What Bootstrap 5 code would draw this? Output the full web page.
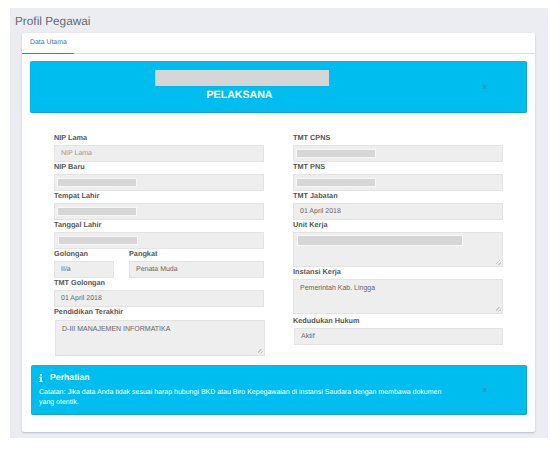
<!DOCTYPE html>
<html lang="id"><head><meta charset="utf-8"><title>Profil Pegawai</title>
<link href="https://cdn.jsdelivr.net/npm/bootstrap@5.3.0/dist/css/bootstrap.min.css" rel="stylesheet">
<style>
html,body{background:#fff;}
body{font-family:"Liberation Sans",Arial,sans-serif;font-size:7px;color:#555;text-rendering:geometricPrecision;}
.shell{margin:8px 12px 11px 10px;background:#ebedf2;padding:0 13px 6px 12px;height:430px;}
.page-ttl{font-size:11.8px;line-height:14px;font-weight:400;color:#666a70;margin:0 0 0 -7px;padding:6px 0 5px 0;height:25px;}
.sheet{border:0;border-radius:2px;box-shadow:0 1px 2px rgba(90,100,120,.35);background:#fff;height:399px;}
.tabbar{height:21px;border-bottom:1px solid #d8dbe2;margin:0;padding:0;flex-wrap:nowrap;}
.tabbar .nav-link{font-size:6.9px;line-height:20px;height:21px;padding:0 8px;color:#4a6fa5;border-bottom:1px solid #4a76b8;width:52px;border-radius:0;white-space:nowrap;}
.sheet-in{padding:7px 8px 0 8px;}
.hero{background:#00bdf0;border:0;border-bottom:1px solid #12a5cd;border-right:1px solid #12a5cd;border-radius:2px;height:52px;margin:0;color:#fff;}
.hero-main{width:424px;padding-top:9px;text-align:center;}
.hidden-name{background:#d6d6d6;width:173px;height:16px;margin:0 auto;box-shadow:-1px 0 0 rgba(255,255,255,.5);}
.hero-rank{font-size:10.6px;font-weight:700;line-height:14px;margin-top:2px;padding-right:5px;}
.dismiss{background:none;border:0;padding:0;color:#3f8aa5;font-size:9px;line-height:10px;width:10px;margin-left:26px;}
.form-area{margin:0;padding-top:20px;}
.col-a{padding:0 14.5px 0 24px;}
.col-b{padding:0 24px 0 14.5px;}
.fld-lbl{display:block;margin:0;font-size:7.3px;font-weight:700;line-height:9px;height:12px;color:#555;}
.fld-box.form-control,.fld-area.form-control{background:#eee;border:1px solid #e3e3e3;border-radius:0;font-size:7px;color:#666;padding:0 6px;box-shadow:none;}
.fld-box.form-control{height:17px;line-height:15px;display:flex;align-items:center;}
.fld-area.form-control{display:block;padding:3px 6px;line-height:10px;min-height:0;width:100%;}
.fld-area::-webkit-resizer{background:linear-gradient(135deg,transparent 30%,#c8c8c8 30%,#c8c8c8 45%,transparent 45%,transparent 65%,#c8c8c8 65%,#c8c8c8 80%,transparent 80%) no-repeat right 1px bottom 1px/5px 5px;}
.muted-val.form-control{color:#999;}
.mask{display:block;background:#d6d6d6;height:7px;width:78px;margin-left:-3px;box-shadow:0 0 0 1px rgba(255,255,255,.5);}
.mask-b{margin-left:-2px;}
.fld-wrap{position:relative;}
.fld-wrap .mask{position:absolute;left:5px;top:4px;width:164px;height:9px;margin:0;}
.gol{width:60px;flex:none;}
.gap-g{gap:15px;}
.h35{height:35px;}
.h36{height:36px;}
.nudge{margin-left:1px;margin-right:-1px;margin-top:1px;}
.nudge-b{margin-top:2px;}
.nudge-c{margin-left:1px;}
.notice{background:#00bdf0;border:0;border-bottom:1px solid #12a5cd;border-right:1px solid #12a5cd;border-radius:2px;height:50px;margin:9px 0 0 1px;padding:0;color:#fff;}
.notice-main{width:423px;padding:6px 0 0 8px;}
.notice-head{font-size:8.7px;font-weight:700;line-height:13px;margin:0 0 4px;display:flex;align-items:center;gap:7px;}
.notice-txt{font-size:7px;line-height:10px;margin:0;width:410px;}
</style></head><body>
<div class="shell">
<h1 class="page-ttl">Profil Pegawai</h1>
<div class="card sheet">
<ul class="nav tabbar"><li class="nav-item"><a class="nav-link active" href="#">Data Utama</a></li></ul>
<div class="sheet-in">
<div class="alert hero d-flex p-0" role="alert">
<div class="hero-main"><div class="hidden-name"></div><div class="hero-rank">PELAKSANA</div></div>
<button class="dismiss" type="button" aria-label="Close">×</button>
</div>
<div class="row g-0 form-area">
<div class="col-6 col-a">
<label class="fld-lbl">NIP Lama</label><div class="form-control fld-box muted-val">NIP Lama</div>
<label class="fld-lbl">NIP Baru</label><div class="form-control fld-box"><span class="mask"></span></div>
<label class="fld-lbl">Tempat Lahir</label><div class="form-control fld-box"><span class="mask"></span></div>
<label class="fld-lbl">Tanggal Lahir</label><div class="form-control fld-box"><span class="mask mask-b"></span></div>
<div class="d-flex gap-g">
<div class="gol"><label class="fld-lbl">Golongan</label><div class="form-control fld-box">II/a</div></div>
<div class="flex-grow-1"><label class="fld-lbl">Pangkat</label><div class="form-control fld-box">Penata Muda</div></div>
</div>
<label class="fld-lbl">TMT Golongan</label><div class="form-control fld-box">01 April 2018</div>
<label class="fld-lbl">Pendidikan Terakhir</label>
<div class="nudge"><textarea class="form-control fld-area h36" readonly>D-III MANAJEMEN INFORMATIKA</textarea></div>
</div>
<div class="col-6 col-b">
<label class="fld-lbl">TMT CPNS</label><div class="form-control fld-box"><span class="mask"></span></div>
<label class="fld-lbl">TMT PNS</label><div class="form-control fld-box"><span class="mask"></span></div>
<label class="fld-lbl">TMT Jabatan</label><div class="form-control fld-box">01 April 2018</div>
<label class="fld-lbl">Unit Kerja</label>
<div class="fld-wrap"><textarea class="form-control fld-area h35" readonly></textarea><span class="mask"></span></div>
<label class="fld-lbl">Instansi Kerja</label>
<textarea class="form-control fld-area h35" readonly>Pemerintah Kab. Lingga</textarea>
<div class="nudge-b"><label class="fld-lbl">Kedudukan Hukum</label></div>
<div class="nudge-c"><div class="form-control fld-box">Aktif</div></div>
</div>
</div>
<div class="alert notice d-flex" role="alert">
<div class="notice-main">
<div class="notice-head"><svg width="4" height="8" viewBox="0 0 4 9" aria-hidden="true"><rect x="1" y="0" width="2" height="2" fill="#fff"/><path d="M0 3h3v5h1v1H0V8h1V4H0z" fill="#fff"/></svg><span>Perhatian</span></div>
<p class="notice-txt">Catatan: Jika data Anda tidak sesuai harap hubungi BKD atau Biro Kepegawaian di instansi Saudara dengan membawa dokumen yang otentik.</p>
</div>
<button class="dismiss" type="button" aria-label="Close">×</button>
</div>
</div>
</div>
</div>
<script src="https://cdn.jsdelivr.net/npm/bootstrap@5.3.0/dist/js/bootstrap.bundle.min.js"></script>
</body></html>
